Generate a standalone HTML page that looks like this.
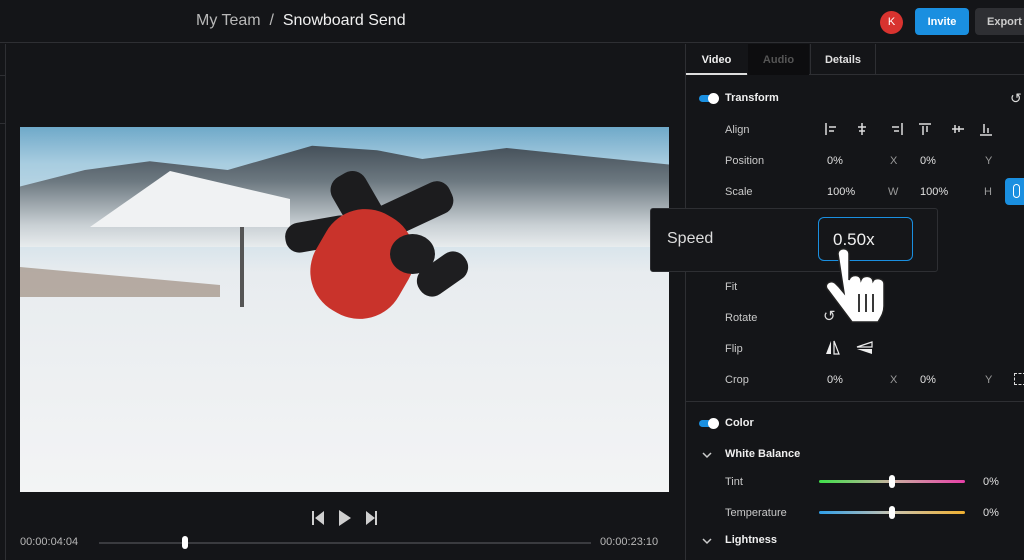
<!DOCTYPE html>
<html><head><meta charset="utf-8"><style>
*{box-sizing:border-box;margin:0;padding:0}
body{width:1024px;height:560px;background:#141518;font-family:"Liberation Sans",sans-serif;color:#e6e6e6;position:relative;overflow:hidden;font-size:11px}
.abs{position:absolute}
.lbl{position:absolute;color:#c9c9c9;font-size:11px}
.val{position:absolute;color:#e0e0e0;font-size:11px}
.dim{position:absolute;color:#9a9a9a;font-size:11px}
.tog{position:absolute;width:18px;height:7px;border-radius:4px;background:#1a8fe0}
.tog:after{content:"";position:absolute;right:-2px;top:-2px;width:11px;height:11px;border-radius:50%;background:#fff}
.h{position:absolute;font-weight:bold;font-size:11px;color:#f0f0f0}
</style></head><body>
<div class="abs" style="left:0;top:0;width:1024px;height:43px;border-bottom:1px solid #2e2f33"></div>
<div class="abs" style="left:196px;top:12px;font-size:16px;color:#b8b8b8">My Team &nbsp;/ &nbsp;<span style="color:#f0f0f0">Snowboard Send</span></div>
<div class="abs" style="left:880px;top:11px;width:23px;height:23px;border-radius:50%;background:#d8332f;color:#fff;font-size:11px;text-align:center;line-height:23px">K</div>
<div class="abs" style="left:915px;top:8px;width:54px;height:27px;border-radius:4px;background:#1a8fe0;color:#fff;font-size:11px;font-weight:bold;text-align:center;padding-top:8px">Invite</div>
<div class="abs" style="left:975px;top:8px;width:60px;height:27px;border-radius:4px;background:#2e2f33;color:#ccc;font-size:11px;font-weight:bold;padding:8px 0 0 12px">Export</div>
<div class="abs" style="left:5px;top:44px;width:1px;height:516px;background:#2e2f33"></div>
<div class="abs" style="left:0;top:75px;width:5px;height:1px;background:#2e2f33"></div>
<div class="abs" style="left:0;top:123px;width:5px;height:1px;background:#2e2f33"></div>
<!-- video -->
<div class="abs" style="left:20px;top:127px;width:649px;height:365px;overflow:hidden;background:linear-gradient(180deg,#6fa9c9 0%,#a8cde0 10%,#e8ecef 40%,#f3f4f5 100%)">
<div class="abs" style="left:0;top:10px;width:649px;height:110px;background:linear-gradient(180deg,#3b4650 0%,#6c7880 40%,#c9d0d4 80%,#e8ecee 100%);clip-path:polygon(0 45%,10% 30%,20% 22%,32% 30%,45% 8%,55% 12%,62% 20%,75% 10%,88% 18%,100% 25%,100% 100%,0 100%)"></div>
<div class="abs" style="left:70px;top:30px;width:200px;height:70px;background:#f0f2f3;clip-path:polygon(0 100%,40% 20%,100% 60%,100% 100%)"></div>
<div class="abs" style="left:0;top:140px;width:200px;height:30px;background:#8a7563;opacity:.55;clip-path:polygon(0 0,100% 60%,100% 100%,0 100%)"></div>
<div class="abs" style="left:220px;top:100px;width:4px;height:80px;background:#555"></div>
<div class="abs" style="left:245px;top:42px;width:210px;height:160px">
<div class="abs" style="left:80px;top:0;width:38px;height:90px;background:#1c1c1e;border-radius:15px;transform:rotate(-30deg)"></div>
<div class="abs" style="left:100px;top:25px;width:90px;height:34px;background:#1c1c1e;border-radius:14px;transform:rotate(-25deg)"></div>
<div class="abs" style="left:20px;top:50px;width:70px;height:30px;background:#1c1c1e;border-radius:14px;transform:rotate(-10deg)"></div>
<div class="abs" style="left:50px;top:40px;width:95px;height:110px;background:#c9332b;border-radius:45px;transform:rotate(30deg)"></div>
<div class="abs" style="left:125px;top:65px;width:45px;height:40px;background:#1e1e20;border-radius:50%"></div>
<div class="abs" style="left:150px;top:90px;width:55px;height:30px;background:#1e1e20;border-radius:14px;transform:rotate(-35deg)"></div>
</div>
</div>
<!-- playback -->
<svg class="abs" style="left:310px;top:509px" width="70" height="18" viewBox="0 0 70 18"><path d="M2 2h2v14H2zM14 2v14L5 9z" fill="#cfcfcf"/><path d="M29 1v16l12-8z" fill="#cfcfcf"/><path d="M56 2v14l9-7zM65 2h2v14h-2z" fill="#cfcfcf"/></svg>
<div class="abs" style="left:20px;top:536px;font-size:11px;color:#b8b8b8">00:00:04:04</div>
<div class="abs" style="left:600px;top:536px;font-size:11px;color:#b8b8b8">00:00:23:10</div>
<div class="abs" style="left:99px;top:542px;width:492px;height:2px;background:#3a3b3f"></div>
<div class="abs" style="left:182px;top:536px;width:6px;height:13px;border-radius:3px;background:#fff"></div>
<!-- right panel -->
<div class="abs" style="left:685px;top:44px;width:1px;height:516px;background:#2e2f33"></div>
<div class="abs" style="left:686px;top:44px;width:338px;height:31px;border-bottom:1px solid #2e2f33"></div>
<div class="abs" style="left:686px;top:44px;width:61px;height:31px;border-bottom:2px solid #ddd;text-align:center;padding-top:10px;font-weight:bold;color:#f0f0f0">Video</div>
<div class="abs" style="left:748px;top:44px;width:61px;height:31px;background:#0d0d0f;text-align:center;padding-top:10px;font-weight:bold;color:#555">Audio</div>
<div class="abs" style="left:810px;top:44px;width:66px;height:31px;border-right:1px solid #2e2f33;border-left:1px solid #2e2f33;text-align:center;padding-top:10px;font-weight:bold;color:#e0e0e0">Details</div>
<div class="tog" style="left:699px;top:95px"></div>
<div class="h" style="left:725px;top:92px">Transform</div>
<div class="abs" style="left:1010px;top:90px;color:#ddd;font-size:14px">↺</div>
<div class="lbl" style="left:725px;top:124px">Align</div>
<svg class="abs" style="left:822px;top:121px" width="175" height="16" fill="none" stroke="#ddd" stroke-width="1.5"><path d="M4 2v12M7 6h7M7 10h5"/><path d="M40 2v12M36 6h8M37 10h6"/><path d="M80 2v12M70 6h7M72 10h5"/><path d="M97 3h12M101 5v9M105 5v6"/><path d="M130 8h12M133 4v8M137 5v6"/><path d="M158 14h12M162 3v9M166 7v5"/></svg>
<div class="lbl" style="left:725px;top:155px">Position</div>
<div class="val" style="left:827px;top:155px">0%</div><div class="dim" style="left:890px;top:155px">X</div><div class="val" style="left:920px;top:155px">0%</div><div class="dim" style="left:985px;top:155px">Y</div>
<div class="lbl" style="left:725px;top:186px">Scale</div>
<div class="val" style="left:827px;top:186px">100%</div><div class="dim" style="left:888px;top:186px">W</div><div class="val" style="left:920px;top:186px">100%</div><div class="dim" style="left:984px;top:186px">H</div>
<div class="abs" style="left:1005px;top:178px;width:24px;height:27px;border-radius:4px;background:#1a8fe0"></div>
<div class="abs" style="left:1013px;top:184px;width:7px;height:14px;border:1.5px solid #fff;border-radius:4px"></div>
<div class="lbl" style="left:725px;top:281px">Fit</div>
<div class="lbl" style="left:725px;top:312px">Rotate</div>
<div class="abs" style="left:823px;top:307px;color:#ddd;font-size:15px">↺</div>
<div class="lbl" style="left:725px;top:343px">Flip</div>
<svg class="abs" style="left:824px;top:339px" width="50" height="18"><path d="M7 2L2 15h5z" fill="#eee"/><path d="M10 2l5 13h-5z" fill="none" stroke="#eee" stroke-width="1.2"/><path d="M48 3L33 8h15z" fill="none" stroke="#eee" stroke-width="1.2"/><path d="M48 10H33l15 5z" fill="#eee"/></svg>
<div class="lbl" style="left:725px;top:374px">Crop</div>
<div class="val" style="left:827px;top:374px">0%</div><div class="dim" style="left:890px;top:374px">X</div><div class="val" style="left:920px;top:374px">0%</div><div class="dim" style="left:985px;top:374px">Y</div>
<div class="abs" style="left:1014px;top:373px;width:12px;height:12px;border:1.5px dashed #ddd"></div>
<div class="abs" style="left:686px;top:401px;width:338px;height:1px;background:#2e2f33"></div>
<div class="tog" style="left:699px;top:420px"></div>
<div class="h" style="left:725px;top:417px">Color</div>
<svg class="abs" style="left:701px;top:451px" width="12" height="8"><path d="M2 2l4 4 4-4" fill="none" stroke="#ccc" stroke-width="1.5"/></svg>
<div class="h" style="left:725px;top:448px">White Balance</div>
<div class="lbl" style="left:725px;top:476px">Tint</div>
<div class="abs" style="left:819px;top:480px;width:146px;height:3px;border-radius:2px;background:linear-gradient(90deg,#3fe04a,#c9b0a0,#e83fa8)"></div>
<div class="abs" style="left:889px;top:475px;width:6px;height:13px;border-radius:3px;background:#fff"></div>
<div class="val" style="left:983px;top:476px">0%</div>
<div class="lbl" style="left:725px;top:507px">Temperature</div>
<div class="abs" style="left:819px;top:511px;width:146px;height:3px;border-radius:2px;background:linear-gradient(90deg,#2f9fe8,#c9c3b0,#f0b030)"></div>
<div class="abs" style="left:889px;top:506px;width:6px;height:13px;border-radius:3px;background:#fff"></div>
<div class="val" style="left:983px;top:507px">0%</div>
<svg class="abs" style="left:701px;top:537px" width="12" height="8"><path d="M2 2l4 4 4-4" fill="none" stroke="#ccc" stroke-width="1.5"/></svg>
<div class="h" style="left:725px;top:534px">Lightness</div>
<!-- speed popover -->
<div class="abs" style="left:650px;top:208px;width:288px;height:64px;background:#151619;border:1px solid #2e2f33;border-radius:3px"></div>
<div class="abs" style="left:667px;top:230px;font-size:16px;color:#ddd">Speed</div>
<div class="abs" style="left:818px;top:217px;width:95px;height:44px;border:1.5px solid #1a8fe0;border-radius:6px;font-size:17px;color:#f0f0f0;padding:12px 0 0 14px">0.50x</div>
<svg class="abs" style="left:822px;top:246px" width="72" height="82" viewBox="0 0 72 82"><path d="M16 8c0-7 11-7 11 0v26c2-6 11-6 12 0 2-5 11-5 12 1 2-4 11-3 11 3v22c0 7-3 11-6 16H30L6 44c-5-5 2-11 7-7l4 4 5 6z" fill="#fff" stroke="#222" stroke-width="1.5"/><path d="M37 48v18M44 48v18M51 48v18" stroke="#222" stroke-width="1.8"/></svg>
</body></html>
